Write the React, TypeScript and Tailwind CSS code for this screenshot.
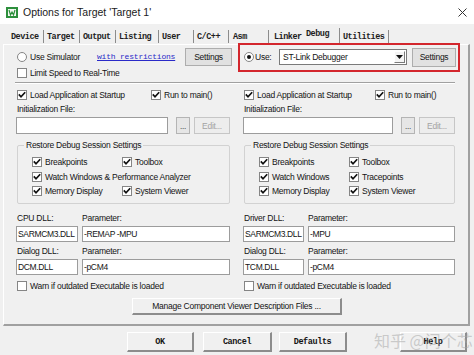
import React from "react";

function Check({ checked = false }: { checked?: boolean }) {
  return (
    <span className="w-[10px] h-[10px] shrink-0 bg-white border border-[#858585] flex items-center justify-center">
      {checked && (
        <svg width="8" height="8" viewBox="0 0 8 8">
          <path d="M0.8 3.4 L3 5.8 L7.2 1.2" stroke="#111" strokeWidth="1.7" fill="none" />
        </svg>
      )}
    </span>
  );
}

function Radio({ checked = false }: { checked?: boolean }) {
  return (
    <span className="w-[10px] h-[10px] shrink-0 rounded-full bg-white border border-[#858585] flex items-center justify-center">
      {checked && <span className="w-[4px] h-[4px] rounded-full bg-[#111]" />}
    </span>
  );
}

function CheckItem({ checked = true, label, w }: { checked?: boolean; label: string; w?: string }) {
  return (
    <div className={`flex items-center h-[10px] gap-[3px] whitespace-nowrap ${w ?? ""}`}>
      <Check checked={checked} />
      <span>{label}</span>
    </div>
  );
}

function Input({ text, className }: { text: string; className: string }) {
  return (
    <div className={`h-[16px] bg-white border border-[#9c9c9c] flex items-center pl-[1px] whitespace-nowrap overflow-hidden tracking-[-0.35px] ${className}`}>
      {text}
    </div>
  );
}

type Cfg = {
  side: "left" | "right";
  runW: string;
  labelW: string;
  dllW: string;
  pr: string;
  groupMr: string;
  dllLabel: string;
  dllVal: string;
  dllParam: string;
  dlgVal: string;
};

function Column({ c }: { c: Cfg }) {
  const left = c.side === "left";
  return (
    <div className="flex flex-col">
      {/* row 1 */}
      {left ? (
        <div className="h-[18px] flex items-center">
          <span className="ml-[1px]">
            <Radio />
          </span>
          <span className="ml-[3px] w-[67px] whitespace-nowrap">Use Simulator</span>
          <span className="font-['Liberation_Mono',monospace] text-[8px] tracking-[-0.2px] text-[#2a2ac8] underline whitespace-nowrap">
            with restrictions
          </span>
          <div className="ml-auto w-[47px] h-[18px] bg-[#e1e1e1] border border-[#adadad] flex items-center justify-center">
            Settings
          </div>
        </div>
      ) : (
        <div className="h-[18px] flex items-center relative">
          <div className="absolute left-[-5px] top-[-5px] w-[222px] h-[29px] border-2 border-[#d3262d]" />
          <span className="ml-[1px]">
            <Radio checked />
          </span>
          <span className="ml-[1px] w-[24px]">Use:</span>
          <div className="w-[128px] h-[16px] bg-white border border-[#7a7a7a] flex items-center pl-[3px] whitespace-nowrap">
            <span>ST-Link Debugger</span>
            <span className="ml-auto mr-[1px] w-[11px] h-[12px] bg-[#f4f4f4] border-t border-l border-white border-r border-b border-r-[#7a7a7a] border-b-[#7a7a7a] flex items-center justify-center">
              <svg width="7" height="4" viewBox="0 0 7 4">
                <path d="M0 0 H7 L3.5 4 Z" fill="#111" />
              </svg>
            </span>
          </div>
          <div className="ml-auto w-[44px] h-[19px] bg-[#e1e1e1] border border-[#adadad] flex items-center justify-center">
            Settings
          </div>
        </div>
      )}
      {/* row 2 */}
      <div className="mt-[2px] h-[10px] flex items-center ml-[1px]">
        {left && <CheckItem checked={false} label="Limit Speed to Real-Time" />}
      </div>
      {/* separator */}
      <div className={`mt-[4px] h-[2px] border-t border-t-[#a0a0a0] border-b border-b-white ${left ? "mr-[-11px] ml-[-1px]" : "mr-[1px]"}`} />
      {/* load app */}
      <div className="mt-[6px] h-[10px] flex items-center ml-[1px]">
        <CheckItem label="Load Application at Startup" w={c.runW} />
        <CheckItem label="Run to main()" />
      </div>
      <div className="mt-[4px] h-[10px] flex items-center ml-[1px] whitespace-nowrap">Initialization File:</div>
      <div className={`mt-[3px] h-[17px] flex items-start ${c.pr}`}>
        <div className="flex-1 h-[17px] bg-white border border-[#9c9c9c]" />
        <div className="ml-[8px] w-[14px] h-[17px] bg-[#e6e6e6] border border-[#b4b4b4] flex items-end justify-center pb-[2px] text-[8px] leading-[8px]">
          ...
        </div>
        <div className="ml-[4px] w-[36px] h-[17px] bg-[#ededed] border border-[#c6c6c6] flex items-center justify-center text-[#a3a3a3]">
          Edit...
        </div>
      </div>
      {/* group */}
      <div className={`relative mt-[11px] ml-[1px] ${c.groupMr} h-[59px] border border-[#d2d2d2] rounded-[2px]`}>
        <span className="absolute left-[6px] top-[-6px] bg-[#f0f0f0] px-[2px] leading-[10px] whitespace-nowrap">
          Restore Debug Session Settings
        </span>
        <div className="pl-[14px] pt-[11px] flex flex-col">
          <div className="flex h-[10px]">
            <CheckItem label="Breakpoints" w="w-[90px]" />
            <CheckItem label="Toolbox" />
          </div>
          <div className="flex h-[10px] mt-[5px]">
            {left ? (
              <CheckItem label="Watch Windows & Performance Analyzer" />
            ) : (
              <>
                <CheckItem label="Watch Windows" w="w-[90px]" />
                <CheckItem label="Tracepoints" />
              </>
            )}
          </div>
          <div className="flex h-[10px] mt-[4px]">
            <CheckItem label="Memory Display" w="w-[90px]" />
            <CheckItem label="System Viewer" />
          </div>
        </div>
      </div>
      {/* dll */}
      <div className="mt-[9px] h-[10px] flex items-center whitespace-nowrap">
        <span className={`ml-[1px] ${c.labelW}`}>{c.dllLabel}</span>
        <span>Parameter:</span>
      </div>
      <div className={`mt-[3px] flex ${c.pr}`}>
        <Input text={c.dllVal} className={c.dllW} />
        <Input text={c.dllParam} className="ml-[4px] flex-1" />
      </div>
      <div className="mt-[4px] h-[10px] flex items-center whitespace-nowrap">
        <span className={`ml-[1px] ${c.labelW}`}>Dialog DLL:</span>
        <span>Parameter:</span>
      </div>
      <div className={`mt-[3px] flex ${c.pr}`}>
        <Input text={c.dlgVal} className={c.dllW} />
        <Input text="-pCM4" className="ml-[4px] flex-1" />
      </div>
      <div className="mt-[6px] h-[10px] flex items-center ml-[1px]">
        <CheckItem checked={false} label="Warn if outdated Executable is loaded" />
      </div>
    </div>
  );
}

const btn3d =
  "h-[20px] bg-[#f0f0f0] border-t border-l border-white border-r-2 border-b-2 border-r-[#8c8c8c] border-b-[#8c8c8c] flex items-center justify-center font-['Liberation_Mono',monospace] font-bold text-[8.5px] tracking-[-0.4px]";

const tabs: { label: string; cls: string }[] = [
  { label: "Device", cls: "w-[40px] pl-[7px] border-r" },
  { label: "Target", cls: "w-[36px] pl-[3px] border-r" },
  { label: "Output", cls: "w-[36px] pl-[3px] border-r" },
  { label: "Listing", cls: "w-[43px] pl-[3px] border-r" },
  { label: "User", cls: "w-[35px] pl-[3px] border-r" },
  { label: "C/C++", cls: "w-[35px] pl-[3px] border-r" },
  { label: "Asm", cls: "w-[40px] pl-[4px] border-r" },
  { label: "Linker", cls: "w-[31px] pl-[5px]" },
];

export default function App() {
  return (
    <div className="w-[474px] h-[355px] bg-[#f0f0f0] relative overflow-hidden font-['Liberation_Sans',Arial,sans-serif] text-[8.5px] leading-[10px] tracking-[-0.25px] text-[#141414]">
      {/* title bar */}
      <div className="h-[24px] bg-white flex items-center pl-[6px] pr-[7px] tracking-normal">
        <svg width="12" height="11" viewBox="0 0 12 11">
          <rect x="0" y="0" width="12" height="11" fill="#2d8f3c" />
          <rect x="2" y="2" width="8" height="7" fill="#f4f8f2" />
          <path d="M3 3 L4.5 8 L6 5 L7.5 8 L9 3" stroke="#2d8f3c" strokeWidth="1.2" fill="none" />
        </svg>
        <span className="ml-[5px] text-[10.5px] leading-[12px] text-[#1a1a1a] whitespace-nowrap">
          Options for Target 'Target 1'
        </span>
        <svg className="ml-auto" width="9" height="9" viewBox="0 0 9 9">
          <path d="M0.5 0.5 L8.5 8.5 M8.5 0.5 L0.5 8.5" stroke="#333" strokeWidth="1" />
        </svg>
      </div>
      {/* tabs */}
      <div className="h-[20px] flex items-end pl-[4px] font-['Liberation_Mono',monospace] font-bold text-[8.5px] tracking-[-0.5px] text-[#1e1e1e]">
        {tabs.map((t) => (
          <div
            key={t.label}
            className={`h-[13px] mb-[1px] shrink-0 flex items-center whitespace-nowrap border-[#8c8c8c] ${t.cls}`}
          >
            {t.label}
          </div>
        ))}
        <div className="w-[40px] h-[16px] pl-[6px] pb-[4px] shrink-0 flex items-center border-r border-[#8c8c8c]">
          Debug
        </div>
        <div className="w-[49px] h-[13px] mb-[1px] pl-[3px] shrink-0 flex items-center border-r border-[#8c8c8c]">
          Utilities
        </div>
      </div>
      {/* panel */}
      <div className="ml-[3px] w-[467px] border-t border-t-white border-l border-l-white border-r-2 border-r-[#a0a0a0] border-b-2 border-b-[#a0a0a0] pt-[3px] pb-[9px] pl-[12px]">
        <div className="grid grid-cols-[216px_213px] gap-x-[11px]">
          <Column
            c={{
              side: "left",
              runW: "w-[134px]",
              labelW: "w-[65px]",
              dllW: "w-[62px]",
              pr: "pr-[2px]",
              groupMr: "mr-[2px]",
              dllLabel: "CPU DLL:",
              dllVal: "SARMCM3.DLL",
              dllParam: "-REMAP -MPU",
              dlgVal: "DCM.DLL",
            }}
          />
          <Column
            c={{
              side: "right",
              runW: "w-[131px]",
              labelW: "w-[64px]",
              dllW: "w-[61px]",
              pr: "pr-[1px]",
              groupMr: "mr-[1px]",
              dllLabel: "Driver DLL:",
              dllVal: "SARMCM3.DLL",
              dllParam: "-MPU",
              dlgVal: "TCM.DLL",
            }}
          />
        </div>
        <div className="mt-[7px] ml-[116px] w-[210px] h-[17px] bg-[#f0f0f0] border-t border-l border-white border-r-2 border-b-2 border-r-[#8c8c8c] border-b-[#8c8c8c] flex items-center justify-center whitespace-nowrap">
          Manage Component Viewer Description Files ...
        </div>
      </div>
      {/* bottom buttons */}
      <div className="mt-[6px] flex">
        <div className={`ml-[127px] w-[67px] ${btn3d}`}>OK</div>
        <div className={`ml-[9px] w-[69px] ${btn3d}`}>Cancel</div>
        <div className={`ml-[7px] w-[68px] ${btn3d}`}>Defaults</div>
        <div className={`ml-[53px] w-[67px] ${btn3d}`}>Help</div>
      </div>
      {/* watermark */}
      <div className="absolute left-[374px] top-[331px] text-[16px] leading-[18px] tracking-normal font-['Noto_Sans_CJK_SC',sans-serif] text-[#a8a8a8]/55 whitespace-nowrap pointer-events-none">
        知乎 @问个芯
      </div>
    </div>
  );
}
